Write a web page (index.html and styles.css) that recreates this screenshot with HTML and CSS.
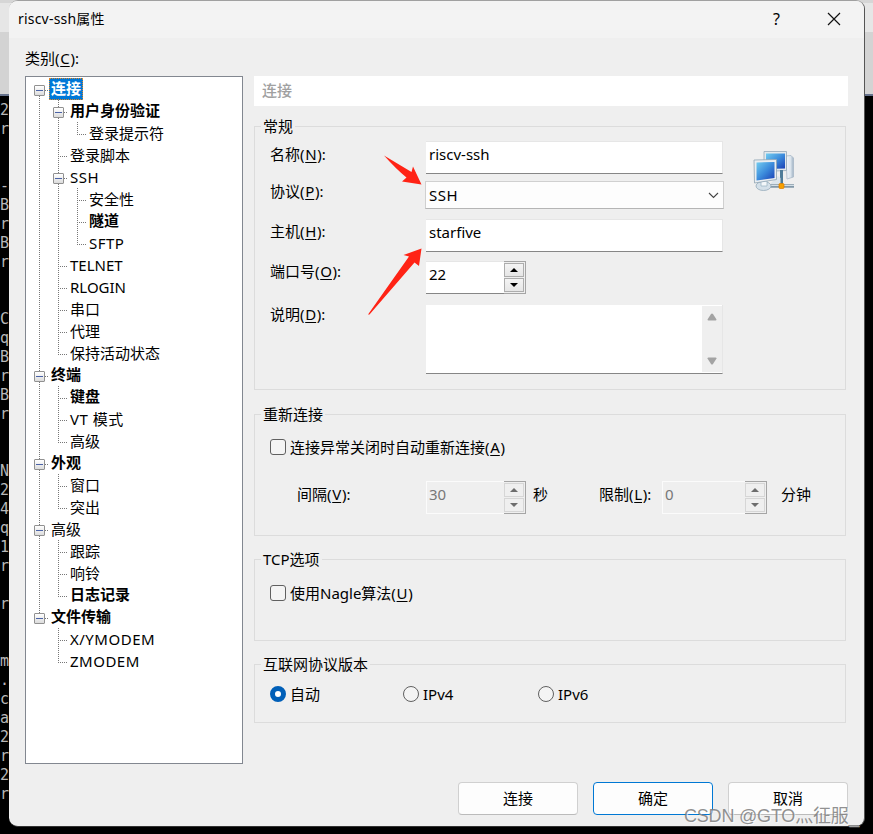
FILE: index.html
```html
<!DOCTYPE html>
<html lang="zh-CN">
<head>
<meta charset="utf-8">
<title>riscv-ssh属性</title>
<link rel="stylesheet" href="styles.css">
</head>
<body>
<div class="backdrop">
  <div class="app-bar"></div>
  <div class="app-toolbar"></div>
<pre class="terminal">2
r


-
B
r
B
r


C
q
B
r
B
r


N
2
4
q
1
r

r


m
.
c
a
2
r
2
r</pre>
</div>

<div class="dialog">
  <div class="title-bar">
    <span class="title">riscv-ssh属性</span>
    <span class="help">?</span>
    <svg class="close" width="14" height="14" viewBox="0 0 14 14"><path d="M1 1L13 13M13 1L1 13" stroke="#111" stroke-width="1.2" fill="none"/></svg>
  </div>

  <div class="category">类别(<u>C</u>):</div>

  <div class="columns">
    <ul class="tree">
      <li>
        <div class="node open bold selected"><span>连接</span></div>
        <ul>
          <li>
            <div class="node open bold"><span>用户身份验证</span></div>
            <ul>
              <li><div class="node"><span>登录提示符</span></div></li>
            </ul>
          </li>
          <li><div class="node"><span>登录脚本</span></div></li>
          <li>
            <div class="node open"><span class="caps">SSH</span></div>
            <ul>
              <li><div class="node"><span>安全性</span></div></li>
              <li><div class="node bold"><span>隧道</span></div></li>
              <li><div class="node"><span class="caps">SFTP</span></div></li>
            </ul>
          </li>
          <li><div class="node"><span>TELNET</span></div></li>
          <li><div class="node"><span>RLOGIN</span></div></li>
          <li><div class="node"><span>串口</span></div></li>
          <li><div class="node"><span>代理</span></div></li>
          <li><div class="node"><span>保持活动状态</span></div></li>
        </ul>
      </li>
      <li>
        <div class="node open bold"><span>终端</span></div>
        <ul>
          <li><div class="node bold"><span>键盘</span></div></li>
          <li><div class="node"><span class="caps">VT 模式</span></div></li>
          <li><div class="node"><span>高级</span></div></li>
        </ul>
      </li>
      <li>
        <div class="node open bold"><span>外观</span></div>
        <ul>
          <li><div class="node"><span>窗口</span></div></li>
          <li><div class="node"><span>突出</span></div></li>
        </ul>
      </li>
      <li>
        <div class="node open"><span>高级</span></div>
        <ul>
          <li><div class="node"><span>跟踪</span></div></li>
          <li><div class="node"><span>响铃</span></div></li>
          <li><div class="node bold"><span>日志记录</span></div></li>
        </ul>
      </li>
      <li>
        <div class="node open bold"><span>文件传输</span></div>
        <ul>
          <li><div class="node"><span class="caps">X/YMODEM</span></div></li>
          <li><div class="node"><span class="caps">ZMODEM</span></div></li>
        </ul>
      </li>
    </ul>

    <div class="page">
      <div class="page-title">连接</div>

      <fieldset class="general">
        <legend>常规</legend>
        <div class="general-body">
          <div class="fields">
            <div class="row name">
              <label>名称(<u>N</u>):</label>
              <div class="text-box">riscv-ssh</div>
            </div>
            <div class="row protocol">
              <label>协议(<u>P</u>):</label>
              <div class="combo">
                <span class="caps">SSH</span>
                <svg width="11" height="7" viewBox="0 0 11 7"><path d="M1 1L5.5 5.5L10 1" stroke="#444" stroke-width="1.1" fill="none"/></svg>
              </div>
            </div>
            <div class="row host">
              <label>主机(<u>H</u>):</label>
              <div class="text-box">starfive</div>
            </div>
            <div class="row port">
              <label>端口号(<u>O</u>):</label>
              <div class="number">
                <span>22</span>
                <div class="spin"><i class="up"></i><i class="down"></i></div>
              </div>
            </div>
            <div class="row note">
              <label>说明(<u>D</u>):</label>
              <div class="text-area">
                <div class="scroll">
                  <svg width="10" height="8" viewBox="0 0 10 8"><path d="M4 1Q5 0 6 1L9.5 6.5Q9.5 7.5 8.5 7.5H1.5Q.5 7.5 .5 6.5Z" fill="#a3a3a3"/></svg>
                  <svg width="10" height="8" viewBox="0 0 10 8"><path d="M4 7Q5 8 6 7L9.5 1.5Q9.5 .5 8.5 .5H1.5Q.5 .5 .5 1.5Z" fill="#a3a3a3"/></svg>
                </div>
              </div>
            </div>
          </div>

          <svg class="computers" width="42" height="42" viewBox="0 0 42 42">
            <defs>
              <linearGradient id="screen" x1="0" y1="0" x2="1" y2="1">
                <stop offset="0" stop-color="#73cdf0"/>
                <stop offset=".5" stop-color="#3c8cdc"/>
                <stop offset="1" stop-color="#1a3fb4"/>
              </linearGradient>
              <linearGradient id="tower" x1="0" y1="0" x2="1" y2="0">
                <stop offset="0" stop-color="#f4f7fa"/>
                <stop offset=".6" stop-color="#dbe4ec"/>
                <stop offset="1" stop-color="#9fb2c4"/>
              </linearGradient>
            </defs>
            <!-- rear computer -->
            <path d="M33 6L38 5.500L40.500 8V27L34 29Z" fill="url(#tower)" stroke="#a9b9c8" stroke-width=".8"/>
            <path d="M11 1.500H33.500V20.500L22 21L11 20Z" fill="#e3e9ed" stroke="#94a8b8" stroke-width=".8"/>
            <path d="M13 3.500H32V18.500L13 19Z" fill="url(#screen)"/>
            <!-- cable -->
            <path d="M28.500 20V34" stroke="#4f7c98" stroke-width="3"/>
            <path d="M17 36H41" stroke="#8398a8" stroke-width="3.600"/>
            <path d="M17 35.500H41" stroke="#d3dfe7" stroke-width="1.200"/>
            <path d="M18 33L25 26L27.500 28V34H18Z" fill="#dce5ec"/>
            <!-- front computer -->
            <ellipse cx="10.500" cy="36" rx="7.500" ry="4.500" fill="#d4e0e9" stroke="#94aaba" stroke-width=".8"/>
            <path d="M8 31H14V36H8Z" fill="#f3f7fa" stroke="#a0b7c5" stroke-width=".8"/>
            <path d="M1 10L23.500 9.500V29.500L1.500 33Z" fill="#eaeef1" stroke="#8fa4b4" stroke-width=".8"/>
            <path d="M3.500 12.500L21.500 12V28L3.500 30.500Z" fill="url(#screen)"/>
            <rect x="26" y="33.500" width="5" height="5" rx="1" fill="#f7a000" stroke="#dc7c00" stroke-width=".7"/>
          </svg>
        </div>
      </fieldset>

      <fieldset class="reconnect">
        <legend>重新连接</legend>
        <div class="option"><i class="check"></i>连接异常关闭时自动重新连接(<u>A</u>)</div>
        <div class="timing">
          <label class="interval">间隔(<u>V</u>):</label>
          <div class="number disabled">
            <span>30</span>
            <div class="spin"><i class="up"></i><i class="down"></i></div>
          </div>
          <span class="seconds">秒</span>
          <label class="limit">限制(<u>L</u>):</label>
          <div class="number disabled wide">
            <span>0</span>
            <div class="spin"><i class="up"></i><i class="down"></i></div>
          </div>
          <span class="minutes">分钟</span>
        </div>
      </fieldset>

      <fieldset class="tcp">
        <legend>TCP选项</legend>
        <div class="option"><i class="check"></i>使用Nagle算法(<u>U</u>)</div>
      </fieldset>

      <fieldset class="ip">
        <legend>互联网协议版本</legend>
        <div class="radios">
          <div class="option"><i class="radio on"></i>自动</div>
          <div class="option"><i class="radio"></i>IPv4</div>
          <div class="option"><i class="radio"></i>IPv6</div>
        </div>
      </fieldset>
    </div>
  </div>

  <div class="buttons">
    <div class="button">连接</div>
    <div class="button default">确定</div>
    <div class="button">取消</div>
  </div>
</div>

<svg class="arrows" width="60" height="170" viewBox="0 0 60 170">
  <path d="M20 5.500L47.500 22L49 16.500L57.500 34.500L38 31.500L42.500 27.500Q33 20 20 5.500Z" fill="#ff2315"/>
  <path d="M4 164.500Q22 139 45 106.500L39.500 105L57.500 98.500L55 116L50.500 112.500Q25 142 5.500 164.500Z" fill="#ff2315"/>
</svg>
<div class="watermark">CSDN @GTO灬征服_</div>
</body>
</html>
```
FILE: styles.css
```css
*, *::before {
  box-sizing: border-box;
}
body {
  margin: 0;
  width: 873px;
  height: 834px;
  overflow: hidden;
  position: relative;
  background: #000;
  color: #000;
  font-family: 'Noto Sans', 'Noto Sans CJK SC', sans-serif;
  font-size: 15px;
  line-height: 20px;
}
ul {
  list-style: none;
  margin: 0;
  padding: 0;
}
u {
  padding: 0 .7px;
  text-underline-offset: 2px;
  text-decoration-thickness: 1px;
}

/* windows behind the dialog */
.backdrop {
  position: absolute;
  inset: 0;
}
.app-bar {
  height: 32px;
  background: #e6e6e6;
  border-top: 3px solid #d6d6d6;
}
.app-toolbar {
  height: 64px;
  background: #d3d3d3;
  border-bottom: 2px solid #66728c;
}
.terminal {
  margin: 5px 0 0;
  color: #b8b8b8;
  font-family: 'DejaVu Sans Mono', monospace;
  font-size: 15px;
  line-height: 19px;
}

.dialog {
  position: relative;
  width: 856px;
  height: 827px;
  margin-left: 9px;
  padding-bottom: 11px;
  display: flex;
  flex-direction: column;
  background: #efefef;
  border: 1px solid #a0a0a0;
  border-left: 0;
  border-right-color: #555;
  border-bottom-color: #333;
  border-radius: 9px;
  overflow: hidden;
}
.title-bar {
  flex: none;
  height: 37px;
  padding: 0 23px 2px 9px;
  display: flex;
  align-items: center;
  background: #f3f3f3;
}
.title {
  flex: 1;
  font-size: 14px;
  letter-spacing: .2px;
}
.help {
  font-size: 16px;
  margin-right: 47px;
}
.category {
  flex: none;
  height: 38px;
  padding-left: 16px;
  line-height: 40px;
}
.columns {
  display: flex;
  gap: 11px;
  padding-left: 16px;
}

/* category tree */
.tree {
  width: 218px;
  height: 688px;
  padding: 1px 0 0 13px;
  background: #fff;
  border: 1px solid #828790;
}
.tree li {
  position: relative;
}
.tree li::before {
  content: '';
  position: absolute;
  left: 0;
  top: 0;
  bottom: 0;
  width: 1px;
  background: repeating-linear-gradient(#777 0 1px, transparent 1px 2px);
}
.tree li:last-child::before {
  bottom: auto;
  height: 13px;
}
.tree > li:first-child::before {
  top: 12px;
}
.tree li ul {
  margin-left: 19px;
}
.node {
  position: relative;
  height: 22px;
  padding-left: 10px;
  background: repeating-linear-gradient(90deg, #777 0 1px, transparent 1px 2px) 0 12px / 9px 1px no-repeat;
}
.node span {
  display: inline-block;
  height: 22px;
  padding: 0 2px;
  line-height: 22px;
}
.open::before {
  content: '';
  position: absolute;
  left: -5px;
  top: 7px;
  width: 11px;
  height: 11px;
  border: 1px solid #919191;
  border-radius: 1px;
  background: linear-gradient(#4b63a7, #4b63a7) center / 7px 1px no-repeat, linear-gradient(#fff, #dcdcdc);
}
.bold {
  font-weight: bold;
}
.node.bold span {
  line-height: 20px;
}
.caps {
  letter-spacing: .5px;
}
.selected span {
  color: #fff;
  background: #0078d7;
  outline: 1px dotted #e08728;
  outline-offset: -1px;
}

/* right side */
.page {
  width: 594px;
}
.page-title {
  height: 30px;
  padding-left: 8px;
  line-height: 28px;
  color: #a0a0a0;
  background: #fff;
  font-weight: 500;
}
fieldset {
  width: 592px;
  min-width: 0;
  margin: 0;
  padding: 0 0 0 15px;
  border: 1px solid #dcdcdc;
}
legend {
  height: 20px;
  margin-left: -9px;
  padding: 0 2px;
}
.general {
  height: 274px;
  margin-top: 10px;
}
.reconnect {
  height: 132px;
  margin-top: 14px;
}
.tcp {
  height: 92px;
  margin-top: 13px;
}
.ip {
  height: 69px;
  margin-top: 13px;
}

.general-body {
  display: flex;
  padding-top: 5px;
}
.row {
  display: flex;
  align-items: flex-start;
}
.row label {
  width: 156px;
  line-height: 26px;
}
.protocol {
  margin-top: 7px;
}
.row.protocol label {
  width: 155px;
  line-height: 20px;
}
.host {
  margin-top: 10px;
}
.row.host label {
  line-height: 24px;
}
.port {
  margin-top: 9px;
}
.row.port label {
  line-height: 20px;
}
.note {
  margin-top: 11px;
}
.row.note label {
  line-height: 18px;
}
.text-box {
  width: 297px;
  height: 33px;
  padding-left: 3px;
  line-height: 25px;
  background: #fff;
  border: solid #e6e6e6;
  border-width: 1px 1px 1px 0;
  border-bottom-color: #868686;
}
.combo {
  width: 299px;
  height: 28px;
  padding: 0 4px 0 3px;
  display: flex;
  align-items: center;
  justify-content: space-between;
  background: #fdfdfd;
  border: 1px solid #d0d0d0;
  border-bottom-color: #b5b5b5;
}
.number {
  width: 100px;
  height: 33px;
  display: flex;
  background: #fff;
  border-bottom: 1px solid #868686;
}
.number span {
  flex: 1;
  padding-left: 3px;
  line-height: 25px;
  border-top: 1px solid #e6e6e6;
}
.spin {
  width: 22px;
  height: 33px;
  padding: 1px 1px 1px 0;
  display: flex;
  flex-direction: column;
  gap: 1px;
  background: #efefef;
  border: solid #a5a5a5;
  border-width: 1px 1px 1px 0;
}
.spin i {
  width: 20px;
  height: 14px;
  border: 1px solid #adadad;
  background: linear-gradient(#f4f4f4, #e6e6e6);
  display: flex;
  align-items: center;
  justify-content: center;
}
.spin i::before {
  content: '';
  border: solid transparent;
  border-width: 0 4px 4px;
  border-bottom-color: #000;
}
.spin .down::before {
  border-width: 4px 4px 0;
  border-top-color: #000;
}
.disabled {
  color: #777;
  background: #efefef;
  border: 0;
}
.disabled span {
  border: 1px solid #fbfbfb;
  border-right: 0;
  padding-left: 2px;
  line-height: 24px;
}
.disabled .spin i {
  border-color: #d6d6d6;
  background: #efefef;
}
.disabled .spin .up::before {
  border-bottom-color: #6d6d6d;
}
.disabled .spin .down::before {
  border-top-color: #6d6d6d;
}
.text-area {
  width: 297px;
  height: 69px;
  padding: 1px 0 1px 1px;
  background: #fff;
  border-right: 1px solid #e6e6e6;
  border-bottom: 1px solid #868686;
}
.scroll {
  width: 20px;
  height: 66px;
  margin-left: auto;
  padding: 7px 5px;
  display: flex;
  flex-direction: column;
  justify-content: space-between;
  background: #efefef;
}
.computers {
  margin: 9px 0 0 29px;
}

.option {
  display: flex;
  align-items: center;
  height: 24px;
}
.check, .radio {
  flex: none;
  width: 16px;
  height: 16px;
  margin-right: 4px;
  border: 1px solid #606060;
  border-radius: 3px;
  background: #f4f4f4;
}
.radio {
  border-radius: 50%;
}
.radio.on {
  border: 5px solid #005fb8;
  background: #fff;
}
.reconnect .option {
  margin-top: 11px;
}
.tcp .option {
  margin-top: 12px;
}
.timing {
  display: flex;
  padding: 22px 0 0 27px;
  line-height: 26px;
}
.interval {
  width: 129px;
}
.seconds {
  width: 73px;
  padding-left: 7px;
}
.limit {
  width: 63px;
}
.timing .wide {
  width: 105px;
}
.minutes {
  padding-left: 14px;
}
.radios {
  display: flex;
  padding-top: 8px;
}
.radios .option {
  width: 135px;
}
.radios .option:first-child {
  width: 133px;
}

.buttons {
  margin-top: auto;
  padding-right: 16px;
  display: flex;
  justify-content: flex-end;
  gap: 15px;
}
.button {
  width: 120px;
  height: 33px;
  line-height: 31px;
  text-align: center;
  background: #fdfdfd;
  border: 1px solid #d0d0d0;
  border-bottom-color: #bbb;
  border-radius: 4px;
}
.button.default {
  border-color: #0078d4;
}

/* annotations on top of everything */
.arrows {
  position: absolute;
  left: 364px;
  top: 150px;
}
.watermark {
  position: absolute;
  left: 684px;
  top: 804px;
  font-family: 'Liberation Sans', 'Noto Sans CJK SC', sans-serif;
  font-size: 18px;
  line-height: 24px;
  letter-spacing: -.2px;
  white-space: nowrap;
  color: rgba(125, 125, 125, .85);
  text-shadow: 1px 1px 0 rgba(255, 255, 255, .6);
}
```
